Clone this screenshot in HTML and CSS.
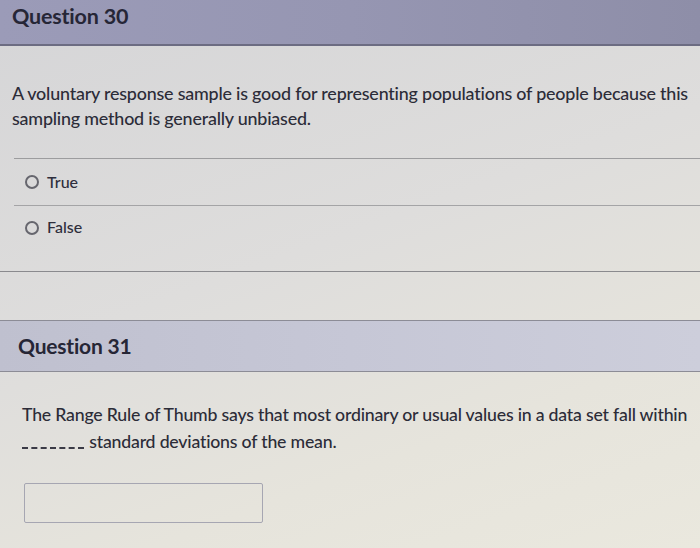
FILE: index.html
```html
<!DOCTYPE html>
<html>
<head>
<meta charset="utf-8">
<link rel="stylesheet" href="styles.css">
</head>
<body>
<div class="page">
  <section class="question q30">
    <div class="q-header"><h2 class="q-title">Question 30</h2></div>
    <div class="q-text">A voluntary response sample is good for representing populations of people because this sampling method is generally unbiased.</div>
    <div class="answers">
      <label class="answer"><span class="radio"></span><span class="answer-label">True</span></label>
      <label class="answer answer-last"><span class="radio"></span><span class="answer-label">False</span></label>
    </div>
  </section>
  <section class="question q31">
    <div class="q-header q-header-light"><h2 class="q-title">Question 31</h2></div>
    <div class="q-text q-text-31">The Range Rule of Thumb says that most ordinary or usual values in a data set fall within <span class="blank"></span> standard deviations of the mean.</div>
    <div class="input-row"><div class="text-input"></div></div>
  </section>
</div>
</body>
</html>
```
FILE: styles.css
```css
html, body {
  margin: 0;
  padding: 0;
}
body {
  width: 700px;
  height: 548px;
  overflow: hidden;
  font-family: "Lato", "Open Sans", sans-serif;
  color: #2c2c38;
}
.page {
  height: 548px;
  background: linear-gradient(160deg, #d5d5d7 0%, #dedddc 45%, #e6e4dc 75%, #eae8de 100%);
}
.q-header {
  height: 46px;
  box-sizing: border-box;
  border-bottom: 2px solid #6c6c82;
  background: linear-gradient(90deg, #9b9bb8 0%, #9696b2 50%, #8e8ea8 100%);
  padding-left: 12px;
  display: flex;
  align-items: flex-start;
}
.q-title {
  margin: 0;
  margin-top: 3px;
  font-size: 21.5px;
  font-weight: 700;
  line-height: 26px;
  color: #262636;
  letter-spacing: -0.2px;
}
.q-text {
  padding: 35px 8px 0 12px;
  font-size: 17.9px;
  font-weight: 500;
  line-height: 25px;
  color: #2c2c38;
  letter-spacing: -0.2px;
}
.answers {
  margin-top: 27px;
  margin-left: 14px;
  border-top: 1px solid #9c9c9e;
}
.answer {
  display: flex;
  align-items: center;
  height: 47px;
  box-sizing: border-box;
  border-bottom: 1px solid #a4a4a6;
  padding-left: 11px;
  font-size: 16px;
  font-weight: 500;
  color: #2e2e3c;
}
.answer-last {
  height: 66px;
  align-items: flex-start;
  padding-top: 12px;
  margin-left: -14px;
  padding-left: 25px;
  border-bottom: 1px solid #8a8a8e;
}
.radio {
  width: 10px;
  height: 10px;
  border: 2px solid #66666e;
  border-radius: 50%;
  margin-right: 8px;
  flex: none;
}
.answer-last .radio {
  margin-top: 3px;
}
.answer-label {
  line-height: 18px;
}
.q31 {
  margin-top: 48px;
}
.q-header-light {
  height: 52px;
  border-top: 1px solid #8c8c96;
  border-bottom: 1px solid #8c8c96;
  background: linear-gradient(90deg, #bfc0cf 0%, #c6c7d6 50%, #cdcedb 100%);
  padding-left: 18px;
  align-items: center;
}
.q-header-light .q-title {
  margin-top: 0;
  font-size: 21px;
}
.q-text-31 {
  padding: 29px 8px 0 22px;
  font-size: 17.7px;
  line-height: 27px;
  letter-spacing: -0.2px;
}
.blank {
  display: inline-block;
  width: 62px;
  height: 1px;
  border-bottom: 2px dashed #3a3a46;
  margin-right: 1px;
  vertical-align: -1px;
}
.input-row {
  padding: 28px 0 0 24px;
}
.text-input {
  width: 239px;
  height: 40px;
  box-sizing: border-box;
  border: 1px solid #a6a6b2;
  border-radius: 2px;
  background: transparent;
}
```
